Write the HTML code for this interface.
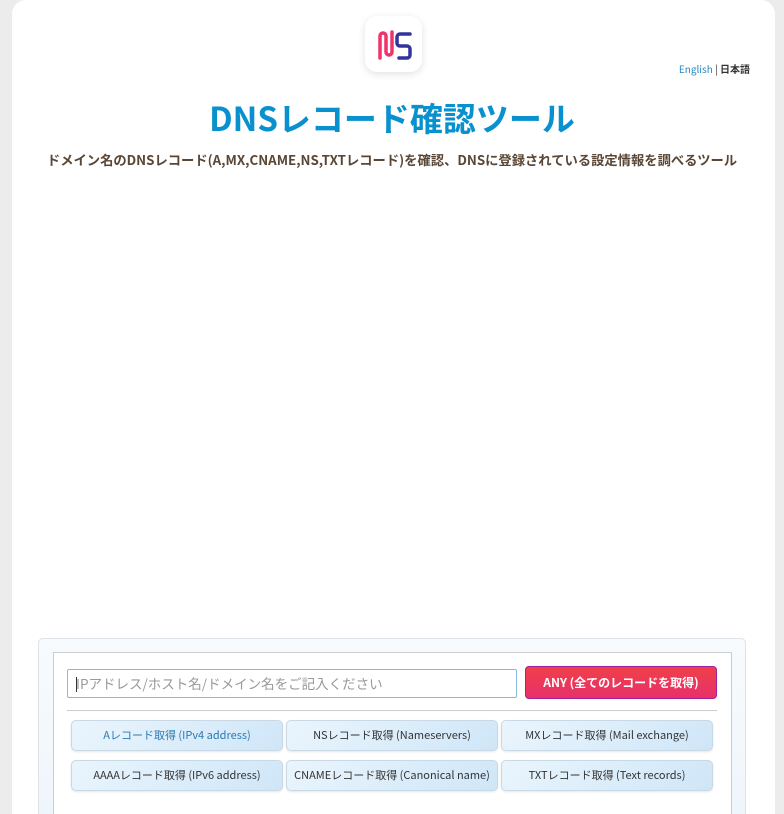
<!DOCTYPE html>
<html><head><meta charset="utf-8"><style>
*{box-sizing:border-box;margin:0;padding:0}
html{width:784px;height:814px;overflow:hidden}
body{width:784px;height:814px;overflow:hidden;background:#ececec;font-family:"Liberation Sans","Noto Sans CJK JP",sans-serif;position:relative}
.card{position:absolute;left:12px;top:0;width:763px;height:814px;background:#fff;border-radius:14px 14px 0 0}
.logo{position:absolute;left:365px;top:16px;width:57px;height:56px;border-radius:12px;background:#fff;box-shadow:0 2px 8px rgba(0,0,0,.12)}
.lang{position:absolute;right:34px;top:61px;font-size:10px;color:#333;font-family:"Noto Sans CJK JP",sans-serif}
.lang a{color:#2a88c0;text-decoration:none}
h1{position:absolute;left:0;width:784px;top:93px;text-align:center;font-size:33px;font-weight:bold;color:#0890cf;font-family:"Noto Sans CJK JP",sans-serif}
.sub{position:absolute;left:0;width:784px;top:150px;text-align:center;font-size:13.3px;font-weight:bold;color:#5a4634;font-family:"Noto Sans CJK JP",sans-serif}
.panel{position:absolute;left:38px;top:638px;width:708px;height:190px;border:1px solid #dde3e8;border-radius:5px;background:linear-gradient(#f8fbfd,#eef5fb)}
.inner{position:absolute;left:53px;top:652px;width:679px;height:170px;border:1px solid #ccc;background:#fff}
.inp{position:absolute;left:67px;top:669px;width:450px;height:29px;border:1px solid #8ab8e0;border-radius:2px;font-size:13.5px;color:#999;padding:4px 8px;font-family:"Noto Sans CJK JP",sans-serif;line-height:19px}
.inp:before{content:"";position:absolute;left:8px;top:7px;width:1px;height:15px;background:#333}
.any{position:absolute;left:525px;top:666px;width:192px;height:33px;border:1px solid #a020a0;border-radius:4px;background:linear-gradient(#f04048,#e8306a);color:#fff;font-size:12px;font-weight:bold;text-align:center;line-height:31px;font-family:"Noto Sans CJK JP",sans-serif}
.hr{position:absolute;left:67px;top:710px;width:650px;height:1px;background:#ccc}
.b{position:absolute;width:212px;height:31px;border:1px solid #c8d8e4;border-radius:5px;background:linear-gradient(135deg,#eaf5fd,#cfe6f8);font-size:11px;color:#333;text-align:center;line-height:29px;font-family:"Noto Sans CJK JP",sans-serif;box-shadow:0 1px 2px rgba(0,0,0,.1)}
</style></head><body>
<div class="card"></div>
<div class="logo"><svg width="57" height="56" viewBox="0 0 57 56"><path d="M15 42V20a3 3 0 0 1 6 0v16a3 3 0 0 0 6 0V16" fill="none" stroke="#f0336a" stroke-width="3.5" stroke-linecap="round"/><path d="M45 18H35a3 3 0 0 0-3 3v6a3 3 0 0 0 3 3h7a3 3 0 0 1 3 3v6a3 3 0 0 1-3 3h-8" fill="none" stroke="#33359a" stroke-width="3.5" stroke-linecap="round"/></svg></div>
<div class="lang"><a>English</a> | <b>日本語</b></div>
<h1>DNSレコード確認ツール</h1>
<div class="sub">ドメイン名のDNSレコード(A,MX,CNAME,NS,TXTレコード)を確認、DNSに登録されている設定情報を調べるツール</div>
<div class="panel"></div>
<div class="inner"></div>
<div class="inp">IPアドレス/ホスト名/ドメイン名をご記入ください</div>
<div class="any">ANY (全てのレコードを取得)</div>
<div class="hr"></div>
<div class="b" style="left:71px;top:720px;color:#2a7ab0">Aレコード取得 (IPv4 address)</div>
<div class="b" style="left:286px;top:720px">NSレコード取得 (Nameservers)</div>
<div class="b" style="left:501px;top:720px">MXレコード取得 (Mail exchange)</div>
<div class="b" style="left:71px;top:760px">AAAAレコード取得 (IPv6 address)</div>
<div class="b" style="left:286px;top:760px">CNAMEレコード取得 (Canonical name)</div>
<div class="b" style="left:501px;top:760px">TXTレコード取得 (Text records)</div>
</body></html>
